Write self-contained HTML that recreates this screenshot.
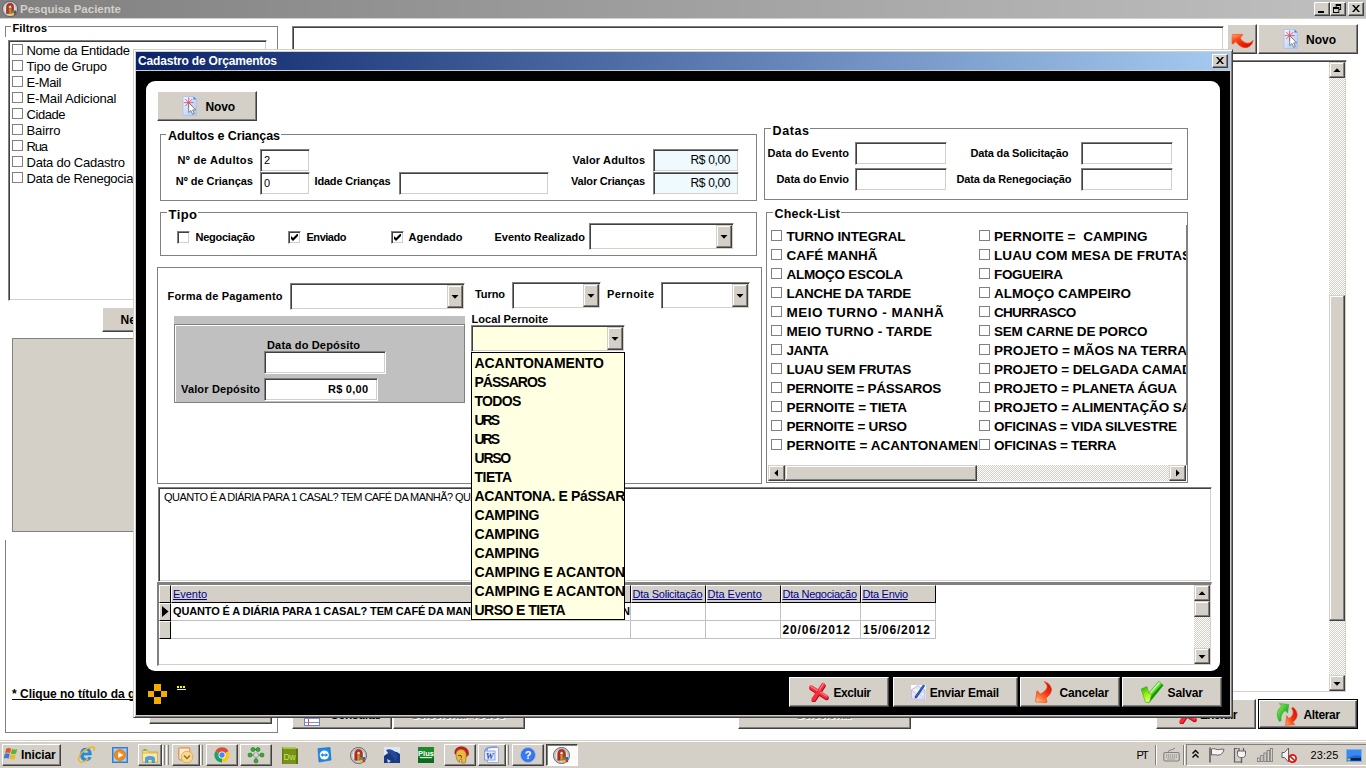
<!DOCTYPE html>
<html><head><meta charset="utf-8"><title>Cadastro de Orçamentos</title>
<style>
html,body{margin:0;padding:0;}
body{width:1366px;height:768px;overflow:hidden;background:#fff;position:relative;font-family:"Liberation Sans",sans-serif;}
.a{position:absolute;box-sizing:border-box;}
.t{position:absolute;white-space:pre;line-height:1;font-family:"Liberation Sans",sans-serif;}
.sk{border:1px solid;border-color:#808080 #fff #fff #808080;box-shadow:inset 1px 1px 0 #404040,inset -1px -1px 0 #d4d0c8;}
.rs{background:#d4d0c8;border:1px solid;border-color:#fff #404040 #404040 #fff;box-shadow:inset -1px -1px 0 #808080,inset 1px 1px 0 #d4d0c8;}
.rs2{background:#d4d0c8;border:1px solid;border-color:#d4d0c8 #404040 #404040 #d4d0c8;box-shadow:inset -1px -1px 0 #808080,inset 1px 1px 0 #fff;}
.gb{border:1px solid #808080;box-shadow:inset 1px 1px 0 #fff, 1px 1px 0 #fff;}
.cb{background:#fff;border:1px solid #808080;}
.dither{background-image:conic-gradient(#fff 25%,#d4d0c8 0 50%,#fff 0 75%,#d4d0c8 0);background-size:2px 2px;}
</style></head>
<body>
<div class="a " style="left:0px;top:0px;width:1366px;height:18px;background:linear-gradient(90deg,#808080,#c0c0c0);"></div>
<div class="a " style="left:0px;top:18px;width:1366px;height:1px;background:#d4d0c8;"></div>
<span class="t" style="left:20.00px;top:4.37px;font-size:11.5px;color:#d4d0c8;font-weight:bold;">Pesquisa Paciente</span>
<div class="a rs" style="left:1314px;top:2px;width:16px;height:14px;"></div>
<div class="a " style="left:1318px;top:11px;width:6px;height:2px;background:#000;"></div>
<div class="a rs" style="left:1330px;top:2px;width:16px;height:14px;"></div>
<svg class="a" style="left:1333px;top:4px" width="9" height="10" viewBox="0 0 10 10" preserveAspectRatio="none"><path d="M3 0h6v6H7V5h1V2H4v1H3z M0 3h7v6H0z M1 5v3h5V5z" fill="#000" fill-rule="evenodd"/></svg>
<div class="a rs" style="left:1348px;top:2px;width:16px;height:14px;"></div>
<svg class="a" style="left:1352px;top:5px" width="8" height="7" viewBox="0 0 8 7"><path d="M0 0h2l2 2.4L6 0h2L5 3.5 8 7H6L4 4.6 2 7H0l3-3.5z" fill="#000"/></svg>
<svg class="a" style="left:2px;top:1px" width="16" height="16" viewBox="0 0 16 16">
<circle cx="8" cy="8" r="7.6" fill="#c8ccd4" stroke="#555" stroke-width=".8"/>
<circle cx="8" cy="8" r="6.2" fill="#e9e4dc" stroke="#9aa" stroke-width=".5"/>
<path d="M4.5 12.5V6.2c0-2.6 1.6-3.9 3.6-3.9s3.6 1.3 3.6 3.9v6.3h-2V6.4c0-1.4-.6-2.1-1.6-2.1s-1.6.7-1.6 2.1v6.1z" fill="#c22d16" stroke="#7a1408" stroke-width=".5"/>
<path d="M6.9 12.5V7h2.2v5.5z" fill="#e8902a" stroke="#7a1408" stroke-width=".4"/>
<rect x="9.5" y="9.5" width="2.5" height="2.5" fill="#3aa23a"/><rect x="12" y="9.5" width="2.2" height="2.5" fill="#2d55c8"/>
<rect x="9.5" y="12" width="2.5" height="2.3" fill="#e8c020"/><rect x="12" y="12" width="2.2" height="2.3" fill="#d03020"/>
</svg>
<div class="a " style="left:5px;top:26px;width:1px;height:11px;background:#808080;"></div>
<div class="a " style="left:277px;top:26px;width:1px;height:707px;background:#808080;"></div>
<div class="a " style="left:5px;top:26px;width:273px;height:1px;background:#808080;"></div>
<div class="a " style="left:11px;top:24px;width:37px;height:6px;background:#fff;"></div>
<span class="t" style="left:12.50px;top:22.69px;font-size:11px;color:#000;font-weight:bold;letter-spacing:0.148px;">Filtros</span>
<div class="a " style="left:5px;top:540px;width:1px;height:193px;background:#808080;"></div>
<div class="a " style="left:5px;top:732px;width:273px;height:1px;background:#808080;"></div>
<div class="a sk" style="left:8px;top:40px;width:259px;height:261px;background:#fff;"></div>
<div class="a cb" style="left:12px;top:44px;width:11px;height:11px;"></div>
<span class="t" style="left:26.50px;top:44.00px;font-size:13px;color:#000;letter-spacing:-0.279px;">Nome da Entidade</span>
<div class="a cb" style="left:12px;top:60px;width:11px;height:11px;"></div>
<span class="t" style="left:26.50px;top:60.00px;font-size:13px;color:#000;letter-spacing:-0.177px;">Tipo de Grupo</span>
<div class="a cb" style="left:12px;top:76px;width:11px;height:11px;"></div>
<span class="t" style="left:26.50px;top:76.00px;font-size:13px;color:#000;letter-spacing:-0.367px;">E-Mail</span>
<div class="a cb" style="left:12px;top:92px;width:11px;height:11px;"></div>
<span class="t" style="left:26.50px;top:92.00px;font-size:13px;color:#000;letter-spacing:-0.166px;">E-Mail Adicional</span>
<div class="a cb" style="left:12px;top:108px;width:11px;height:11px;"></div>
<span class="t" style="left:26.50px;top:108.00px;font-size:13px;color:#000;letter-spacing:-0.439px;">Cidade</span>
<div class="a cb" style="left:12px;top:124px;width:11px;height:11px;"></div>
<span class="t" style="left:26.50px;top:124.00px;font-size:13px;color:#000;letter-spacing:-0.136px;">Bairro</span>
<div class="a cb" style="left:12px;top:140px;width:11px;height:11px;"></div>
<span class="t" style="left:26.50px;top:140.00px;font-size:13px;color:#000;letter-spacing:-1.174px;">Rua</span>
<div class="a cb" style="left:12px;top:156px;width:11px;height:11px;"></div>
<span class="t" style="left:26.50px;top:156.00px;font-size:13px;color:#000;letter-spacing:-0.226px;">Data do Cadastro</span>
<div class="a cb" style="left:12px;top:172px;width:11px;height:11px;"></div>
<span class="t" style="left:26.50px;top:172.00px;font-size:13px;color:#000;letter-spacing:-0.277px;">Data de Renegociação</span>
<div class="a rs" style="left:102px;top:307px;width:80px;height:25px;"></div>
<span class="t" style="left:120.50px;top:313.54px;font-size:12px;color:#000;font-weight:bold;">Nenhum</span>
<div class="a " style="left:12px;top:338px;width:258px;height:194px;background:#d4d0c8;border:1px solid #808080;"></div>
<span class="t" style="left:12px;top:687.84px;font-size:12px;font-weight:bold;letter-spacing:0.002px;text-decoration:underline;text-decoration-skip-ink:none;">* Clique no título da grade para ordenar</span>
<div class="a rs" style="left:149px;top:694px;width:123px;height:30px;"></div>
<div class="a sk" style="left:292px;top:26px;width:932px;height:27px;background:#fff;"></div>
<div class="a rs" style="left:1227px;top:24px;width:30px;height:30px;"></div>
<svg class="a" style="left:1231px;top:32.7px" width="23" height="16" viewBox="0 0 23 16">
<defs><linearGradient id="ra" x1="0" y1="0" x2=".7" y2="1"><stop offset="0" stop-color="#ffb868"/><stop offset=".35" stop-color="#fa4a1a"/><stop offset=".7" stop-color="#ee2408"/><stop offset="1" stop-color="#d01000"/></linearGradient></defs>
<path d="M1.300 1.600L11.300 1.300Q12 1.500 11.500 2.200L9.100 4.900C10.500 7.500 13.500 10 16.500 10.200 19 10.200 20.800 9 21.900 7.300 21.900 9.500 21 11.200 19.600 12.400 17.500 14.500 14.500 15 12.500 14.500 9.500 13.800 6.500 11.500 4.900 8.600L1.900 11Q1.100 11.400 1.100 10.500z" fill="url(#ra)" stroke="#ff4a20" stroke-width=".7" stroke-linejoin="round"/></svg>
<div class="a rs" style="left:1258px;top:24px;width:100px;height:30px;"></div>
<svg class="a" style="left:1283px;top:29px" width="16" height="20" viewBox="0 0 16 20">
<defs><linearGradient id="np1283" x1="0" y1="0" x2="1" y2="1"><stop offset="0" stop-color="#f2f7ff"/><stop offset="1" stop-color="#a9c6f5"/></linearGradient></defs>
<path d="M1 .5h10.500l3 3V19.500H1z" fill="url(#np1283)" stroke="#a8c0ec" stroke-width=".8"/>
<path d="M11.500 .5l3 3h-3z" fill="#2a80f0"/>
<path d="M6.700 1.500v10M1.700 6.600h10M3.200 3.100l7 7M10.200 3.100l-7 7" stroke="#f0344a" stroke-width=".9" opacity=".85"/>
<path d="M6.700 6.600v10l2.200-2.100 1.700 3.800 1.700-.8-1.700-3.600h3.100z" fill="#fff" stroke="#6a6a6a" stroke-width=".8" stroke-linejoin="round"/>
</svg>
<span class="t" style="left:1306.00px;top:34.04px;font-size:12px;color:#000;font-weight:bold;">Novo</span>
<div class="a sk" style="left:292px;top:60px;width:1055px;height:633px;background:#fff;"></div>
<div class="a dither" style="left:1329px;top:62px;width:16px;height:629px;"></div>
<div class="a rs2" style="left:1329px;top:62px;width:16px;height:16px;"></div>
<svg class="a" style="left:1333px;top:68px" width="8" height="4" viewBox="0 0 8 4"><path d="M0.5 4h7L4 0.3z" fill="#000"/></svg>
<div class="a rs2" style="left:1329px;top:295px;width:16px;height:326px;"></div>
<div class="a rs2" style="left:1329px;top:675px;width:16px;height:16px;"></div>
<svg class="a" style="left:1333px;top:681.5px" width="8" height="4" viewBox="0 0 8 4"><path d="M0.5 0h7L4 3.7z" fill="#000"/></svg>
<div class="a rs" style="left:292px;top:699px;width:100px;height:30px;"></div>
<svg class="a" style="left:303.5px;top:710px" width="16" height="16" viewBox="0 0 16 16"><rect x=".5" y=".5" width="15" height="15" fill="#fff" stroke="#7080c0"/><path d="M4.5 1v14" stroke="#e04040" stroke-width="1"/><path d="M1 4.5h14M1 8.5h14M1 12.5h14" stroke="#8090d0" stroke-width="1"/></svg>
<span class="t" style="left:330.00px;top:709.04px;font-size:12px;color:#000;font-weight:bold;letter-spacing:-0.501px;">Consultar</span>
<div class="a rs" style="left:393px;top:699px;width:132px;height:30px;"></div>
<span class="t" style="left:412.00px;top:709.74px;font-size:12px;color:#fff;font-weight:bold;letter-spacing:-0.342px;">Selecionar Todos</span>
<span class="t" style="left:411.00px;top:708.74px;font-size:12px;color:#808080;font-weight:bold;letter-spacing:-0.342px;">Selecionar Todos</span>
<div class="a rs" style="left:738px;top:699px;width:173px;height:30px;"></div>
<span class="t" style="left:797.00px;top:709.74px;font-size:12px;color:#fff;font-weight:bold;letter-spacing:-0.411px;">Selecionar</span>
<span class="t" style="left:796.00px;top:708.74px;font-size:12px;color:#808080;font-weight:bold;letter-spacing:-0.411px;">Selecionar</span>
<div class="a rs" style="left:1156px;top:699px;width:100px;height:30px;"></div>
<svg class="a" style="left:1175.5px;top:703.7px" width="21" height="20" viewBox="0 0 21 20">
<g stroke-linecap="round" fill="none">
<path d="M3.100 5.700L18.300 15.300M15.200 3.200L5.400 17.800" stroke="#b80814" stroke-width="4.200" transform="translate(.4 .8)"/>
<path d="M3.100 5.300L18.300 14.900M15.200 2.800L5.400 17.400" stroke="#f42c3c" stroke-width="4"/>
<path d="M3 4.400L9.300 8.400M15.400 1.900L11.300 8M12.500 10.300L18.400 14" stroke="#ff98a0" stroke-width="1.200" opacity=".75"/>
</g></svg>
<span class="t" style="left:1200.00px;top:709.14px;font-size:12px;color:#000;font-weight:bold;letter-spacing:-0.420px;">Excluir</span>
<div class="a " style="left:1258px;top:699px;width:100px;height:30px;background:#000;"></div>
<div class="a rs" style="left:1259px;top:700px;width:98px;height:28px;"></div>
<svg class="a" style="left:1274.8px;top:701.7px" width="25" height="25" viewBox="0 0 25 25">
<defs><linearGradient id="ag" x1="0" y1="0" x2="1" y2="1"><stop offset="0" stop-color="#a6f070"/><stop offset=".5" stop-color="#3cc030"/><stop offset="1" stop-color="#108a18"/></linearGradient>
<linearGradient id="ar" x1="1" y1="0" x2="0" y2="1"><stop offset="0" stop-color="#c80800"/><stop offset=".5" stop-color="#f03010"/><stop offset="1" stop-color="#ffb060"/></linearGradient></defs>
<path d="M13.700 2.400L4.400 1.600 6.600 4.200C2.500 7.500 .3 12.500 4.400 19.400L6.200 18.600C5.200 14.500 7 11 10.300 8.400L12.500 10.900z" fill="url(#ag)" stroke="#2aa828" stroke-width=".6" stroke-linejoin="round"/>
<path d="M10.500 23.400L19.800 22.600 17.800 20.200C22 17 25 11.500 18.100 5.200L16.600 6.300C19.500 10.500 18 14 14 16.600L11.700 13.700z" fill="url(#ar)" stroke="#f04820" stroke-width=".6" stroke-linejoin="round"/></svg>
<span class="t" style="left:1303.40px;top:709.44px;font-size:12px;color:#000;font-weight:bold;letter-spacing:-0.331px;">Alterar</span>
<div class="a " style="left:0px;top:740px;width:1366px;height:28px;background:#d4d0c8;"></div>
<div class="a " style="left:0px;top:741px;width:1366px;height:1px;background:#fff;"></div>
<div class="a rs" style="left:2px;top:744px;width:59px;height:22px;"></div>
<svg class="a" style="left:4px;top:746px" width="16" height="16" viewBox="0 0 16 16">
<path d="M2.2 2.6C4 1.600 5.600 1.700 7.200 2.700L6 7.200C4.500 6.300 3 6.200 1 7.200z" fill="#e8502a"/>
<path d="M8 2.900c1.700.900 3.400 1 5.400 0L12 7.500c-1.800.900-3.500.800-5.200-.1z" fill="#5ab52e"/>
<path d="M.8 8C2.600 7 4.200 7.100 5.800 8.100L4.600 12.600C3 11.700 1.500 11.600-.3 12.600z" fill="#3a78d8"/>
<path d="M6.600 8.400c1.700.900 3.400 1 5.300 0l-1.300 4.500c-1.800.9-3.400.8-5.200-.1z" fill="#f2b820"/>
</svg>
<span class="t" style="left:21.00px;top:748.84px;font-size:12px;color:#000;font-weight:bold;letter-spacing:-0.108px;">Iniciar</span>
<svg class="a" style="left:77px;top:745px" width="19" height="19" viewBox="0 0 19 19">
<text x="2.200" y="16" font-family="Liberation Sans" font-weight="bold" font-size="23" fill="#1e8ee8" stroke="#1670c8" stroke-width=".3">e</text>
<path d="M2.500 16.500C-1 12 7 3.500 15 2c3-.5 3 1.800 1.600 3.800" fill="none" stroke="#f2b41e" stroke-width="1.500"/>
<path d="M2.800 16.700c2 1.200 6-1 8.500-3.300" fill="none" stroke="#f2b41e" stroke-width="1.300"/></svg>
<svg class="a" style="left:112px;top:747px" width="16" height="16" viewBox="0 0 16 16">
<rect x=".5" y=".5" width="15" height="15" fill="#6aa8e8" stroke="#3a78c8"/><rect x="2" y="2" width="12" height="12" fill="#a8d0f8"/>
<circle cx="8" cy="8" r="5.600" fill="#f08a18" stroke="#d06808" stroke-width=".6"/><path d="M6.300 5v6l5-3z" fill="#fff"/></svg>
<div class="a rs" style="left:138px;top:744px;width:24px;height:22px;"></div>
<svg class="a" style="left:142px;top:748px" width="16" height="15" viewBox="0 0 16 15">
<path d="M.5 2.500h5l1.500 1.500h8.500v10H.5z" fill="#f0d878" stroke="#c8a840" stroke-width=".8"/>
<path d="M.5 5h15v9H.5z" fill="#f8e8a0" stroke="#c8a840" stroke-width=".6"/>
<path d="M3.500 14.500v-4.500c0-2 9-2 9 0v4.500h-2.500v-3h-4v3z" fill="#48a0e8" stroke="#2878c8" stroke-width=".5"/>
<rect x="1.500" y="1" width="3" height="1.200" fill="#58b838"/></svg>
<div class="a " style="left:162px;top:745px;width:3px;height:20px;border-left:1px solid #fff;border-right:1px solid #808080;background:#d4d0c8;"></div>
<div class="a " style="left:166px;top:745px;width:3px;height:20px;border-left:1px solid #fff;border-right:1px solid #808080;background:#d4d0c8;"></div>
<div class="a rs" style="left:172px;top:744px;width:28px;height:22px;"></div>
<svg class="a" style="left:178px;top:747px" width="16" height="17" viewBox="0 0 16 17">
<rect x=".8" y=".8" width="11" height="12" rx="1.500" fill="#fbe8d8" stroke="#e89040" stroke-width="1.200"/>
<circle cx="9" cy="10" r="5.800" fill="#f8d890" stroke="#d8a848" stroke-width=".8"/>
<path d="M6 8.500l3 3 3-3" fill="none" stroke="#a06818" stroke-width="1.300"/></svg>
<div class="a " style="left:200px;top:745px;width:3px;height:20px;border-left:1px solid #fff;border-right:1px solid #808080;background:#d4d0c8;"></div>
<div class="a rs" style="left:206px;top:744px;width:32px;height:22px;"></div>
<svg class="a" style="left:214px;top:747px" width="16" height="16" viewBox="0 0 16 16">
<circle cx="8" cy="8" r="7.600" fill="#e8e8e8"/>
<path d="M8 8L1.400 4.200A7.600 7.600 0 0 1 14.600 4.200z" fill="#dd4b3a"/>
<path d="M8 8L14.600 4.200A7.600 7.600 0 0 1 8 15.600z" fill="#f7c920"/>
<path d="M8 8L8 15.600A7.600 7.600 0 0 1 1.400 4.200z" fill="#1ea362"/>
<circle cx="8" cy="8" r="3.500" fill="#fff"/><circle cx="8" cy="8" r="2.700" fill="#4a88f0"/></svg>
<div class="a rs" style="left:240px;top:744px;width:32px;height:22px;"></div>
<svg class="a" style="left:247px;top:746px" width="18" height="18" viewBox="0 0 18 18">
<path d="M4 9h10M9 9v6M6 3.500h5" stroke="#555" stroke-width=".8"/>
<circle cx="6" cy="3.500" r="2" fill="#30b030" stroke="#187018" stroke-width=".6"/><circle cx="11" cy="3.500" r="2" fill="#30b030" stroke="#187018" stroke-width=".6"/>
<circle cx="3" cy="9" r="2" fill="#30b030" stroke="#187018" stroke-width=".6"/><circle cx="15" cy="9" r="2" fill="#30b030" stroke="#187018" stroke-width=".6"/>
<rect x="7" y="7" width="4" height="4" fill="#ddd" stroke="#888" stroke-width=".5"/>
<circle cx="9" cy="15" r="2" fill="#30b030" stroke="#187018" stroke-width=".6"/></svg>
<svg class="a" style="left:282px;top:746.5px" width="16" height="17" viewBox="0 0 16 17">
<rect x="0" y=".5" width="14" height="16.500" fill="#788f1e"/><rect x="14" y="1.500" width="2" height="15.500" fill="#5e7612"/>
<rect x="0" y=".5" width="1.200" height="16.500" fill="#667c14"/><rect x=".8" y=".5" width="13.200" height="1.200" fill="#b6de3e"/>
<text x="7.600" y="12.500" font-family="Liberation Sans" font-size="8.500" text-anchor="middle" fill="#c8e850">Dw</text></svg>
<svg class="a" style="left:317px;top:747px" width="15" height="16" viewBox="0 0 15 16">
<path d="M1 1.500l12-1 1 12.500-12 2z" fill="#1a8ae8" stroke="#0a68c8" stroke-width=".6"/>
<circle cx="7.300" cy="8" r="4.600" fill="#fff"/><path d="M3.500 8l2.500-2v1.300h2.600V6l2.500 2-2.500 2V8.700H6V10z" fill="#1a8ae8"/></svg>
<svg class="a" style="left:350px;top:746.5px" width="17" height="17" viewBox="0 0 16 16">
<circle cx="8" cy="8" r="7.6" fill="#c8ccd4" stroke="#555" stroke-width=".8"/>
<circle cx="8" cy="8" r="6.2" fill="#e9e4dc" stroke="#9aa" stroke-width=".5"/>
<path d="M4.5 12.5V6.2c0-2.6 1.6-3.9 3.6-3.9s3.6 1.3 3.6 3.9v6.3h-2V6.4c0-1.4-.6-2.1-1.6-2.1s-1.6.7-1.6 2.1v6.1z" fill="#c22d16" stroke="#7a1408" stroke-width=".5"/>
<path d="M6.9 12.5V7h2.2v5.5z" fill="#e8902a" stroke="#7a1408" stroke-width=".4"/>
<rect x="9.5" y="9.5" width="2.5" height="2.5" fill="#3aa23a"/><rect x="12" y="9.5" width="2.2" height="2.5" fill="#2d55c8"/>
<rect x="9.5" y="12" width="2.5" height="2.3" fill="#e8c020"/><rect x="12" y="12" width="2.2" height="2.3" fill="#d03020"/>
</svg>
<svg class="a" style="left:384px;top:747px" width="16" height="16" viewBox="0 0 16 16">
<rect width="16" height="16" fill="#1a3a80"/><path d="M0 0h16v7C11 3 6 4 0 9z" fill="#dfe8f4"/>
<path d="M2 3c4-2 9 0 11 5 1 3-1 5-2 7-1-3-2-6-5-8-2-1-3-2-4-4z" fill="#24489a"/><path d="M3 12l4 2-3 2z" fill="#c8d8f0"/></svg>
<svg class="a" style="left:418px;top:747px" width="16" height="16" viewBox="0 0 16 16">
<rect width="16" height="16" fill="#1a8a2a"/><rect y="11" width="16" height="5" fill="#0e6a1c"/>
<text x="8" y="8.800" font-family="Liberation Sans" font-size="7.500" font-weight="bold" text-anchor="middle" fill="#fff">Plus</text>
<rect x="2" y="10" width="12" height="1.200" fill="#fff" opacity=".8"/></svg>
<div class="a rs" style="left:444px;top:744px;width:32px;height:22px;"></div>
<svg class="a" style="left:453px;top:746px" width="17" height="18" viewBox="0 0 17 18">
<path d="M2 8C1 3 5 .5 9 .8c4 .3 7 3 6.500 8l-2 2c.5-5-2-7.500-5.500-7.500C5 3.300 3 5 3.200 8z" fill="#d01818" stroke="#900808" stroke-width=".5"/>
<path d="M3 8.500c0-3.500 2.500-5 5-5s5.500 2 5.200 6.500l-.7 6.500c-1.500.8-3 .8-3.800.4L8.500 13l-2 1 .3 2.600C4.500 15.500 3 12.500 3 8.500z" fill="#e8b840" stroke="#906010" stroke-width=".6"/>
<path d="M5 9.500h3l.5 2.500" fill="none" stroke="#604008" stroke-width=".9"/></svg>
<div class="a rs" style="left:478px;top:744px;width:28px;height:22px;"></div>
<svg class="a" style="left:484px;top:746px" width="17" height="18" viewBox="0 0 17 18">
<path d="M3.500 1.500h11v15h-11z" fill="#f4f6fc" stroke="#8aa0d8" stroke-width=".8"/>
<path d="M1 4.500C2 1.500 5 .8 13 1" fill="none" stroke="#7a98e0" stroke-width="1.400"/>
<rect x=".5" y="5" width="10.500" height="9" fill="#dfe8fa" stroke="#6a88d0" stroke-width=".7"/>
<text x="5.800" y="12.500" font-family="Liberation Serif" font-style="italic" font-weight="bold" font-size="9" text-anchor="middle" fill="#2a4ab0">W</text></svg>
<div class="a " style="left:506px;top:745px;width:3px;height:20px;border-left:1px solid #fff;border-right:1px solid #808080;background:#d4d0c8;"></div>
<div class="a rs" style="left:512px;top:744px;width:32px;height:22px;"></div>
<svg class="a" style="left:520px;top:747px" width="16" height="16" viewBox="0 0 16 16">
<circle cx="8" cy="8" r="7.400" fill="#2a68e0" stroke="#9ab8f0" stroke-width="1"/><circle cx="8" cy="8" r="6" fill="#3a78f0"/>
<text x="8" y="12" font-family="Liberation Sans" font-weight="bold" font-size="11" text-anchor="middle" fill="#fff">?</text></svg>
<div class="a " style="left:546px;top:744px;width:32px;height:22px;background:#fbfbfa;border:1px solid;border-color:#404040 #fff #fff #404040;box-shadow:inset 1px 1px 0 #808080;"></div>
<svg class="a" style="left:553px;top:746.5px" width="17" height="17" viewBox="0 0 16 16">
<circle cx="8" cy="8" r="7.6" fill="#c8ccd4" stroke="#555" stroke-width=".8"/>
<circle cx="8" cy="8" r="6.2" fill="#e9e4dc" stroke="#9aa" stroke-width=".5"/>
<path d="M4.5 12.5V6.2c0-2.6 1.6-3.9 3.6-3.9s3.6 1.3 3.6 3.9v6.3h-2V6.4c0-1.4-.6-2.1-1.6-2.1s-1.6.7-1.6 2.1v6.1z" fill="#c22d16" stroke="#7a1408" stroke-width=".5"/>
<path d="M6.9 12.5V7h2.2v5.5z" fill="#e8902a" stroke="#7a1408" stroke-width=".4"/>
<rect x="9.5" y="9.5" width="2.5" height="2.5" fill="#3aa23a"/><rect x="12" y="9.5" width="2.2" height="2.5" fill="#2d55c8"/>
<rect x="9.5" y="12" width="2.5" height="2.3" fill="#e8c020"/><rect x="12" y="12" width="2.2" height="2.3" fill="#d03020"/>
</svg>
<span class="t" style="left:1136.60px;top:750.09px;font-size:11px;color:#000;letter-spacing:-1.856px;">PT</span>
<div class="a " style="left:1155px;top:745px;width:2px;height:20px;border-left:1px solid #808080;border-right:1px solid #fff;"></div>
<svg class="a" style="left:1163px;top:747px" width="17" height="15" viewBox="0 0 17 15">
<path d="M5 5C6 2 9 4 12 1" fill="none" stroke="#808080" stroke-width="1"/>
<rect x=".8" y="5.500" width="15.400" height="8.500" rx="1.500" fill="#d4d0c8" stroke="#808080" stroke-width="1.100"/>
<path d="M3 8h11M3 10h11M4.500 12h8" stroke="#808080" stroke-width="1" stroke-dasharray="1.200 .8"/></svg>
<div class="a " style="left:1183px;top:745px;width:2px;height:20px;border-left:1px solid #808080;border-right:1px solid #fff;"></div>
<div class="a " style="left:1186px;top:744px;width:182px;height:22px;border:1px solid;border-color:#808080 #fff #fff #808080;"></div>
<svg class="a" style="left:1192px;top:749px" width="7" height="10" viewBox="0 0 7 10"><path d="M.5 4.500l3-3 3 3M.5 8.500l3-3 3 3" fill="none" stroke="#000" stroke-width="1.400"/></svg>
<svg class="a" style="left:1208px;top:746px" width="18" height="18" viewBox="0 0 18 18"><path d="M2 1.500v15" stroke="#606060" stroke-width="1.600"/><path d="M3.500 3c3-1.500 5 1.500 8 .5 2-.5 3.500-.5 4.500 0-1 4-3 5-5 5.500-2.500.5-4.500-1-7.500 0z" fill="#f4f4f4" stroke="#606060" stroke-width="1"/></svg>
<svg class="a" style="left:1233px;top:747px" width="15" height="17" viewBox="0 0 15 17"><path d="M4.500 1.500H1.500v13.500h7" fill="none" stroke="#606060" stroke-width="1.200"/><path d="M6 1v3M10.500 1v3" stroke="#606060" stroke-width="1.300"/><path d="M4.500 4h8v3.500c0 2-1.500 3-3 3h-2c-1.500 0-3-1-3-3z" fill="#f4f4f4" stroke="#606060" stroke-width="1"/><path d="M8.500 10.500v5.500" stroke="#606060" stroke-width="1.400"/></svg>
<svg class="a" style="left:1257px;top:748px" width="16" height="14" viewBox="0 0 16 14"><g fill="#d4d0c8" stroke="#808080" stroke-width=".9"><rect x=".5" y="10" width="2.500" height="3.500"/><rect x="3.700" y="7.500" width="2.500" height="6"/><rect x="6.900" y="5" width="2.500" height="8.500"/><rect x="10.100" y="2.500" width="2.500" height="11"/><rect x="13.300" y=".5" width="2.300" height="13"/></g></svg>
<svg class="a" style="left:1281px;top:746px" width="17" height="18" viewBox="0 0 17 18"><path d="M1 6.500h2.500l4-4.500v14l-4-4.500H1z" fill="#f4f4f4" stroke="#606060" stroke-width="1"/><circle cx="11.500" cy="12.500" r="3.600" fill="#fff" stroke="#e01010" stroke-width="1.700"/><path d="M9 10l5 5" stroke="#e01010" stroke-width="1.700"/></svg>
<span class="t" style="left:1310.60px;top:750.09px;font-size:11px;color:#000;letter-spacing:0.043px;">23:25</span>
<svg class="a" style="left:1346px;top:749px" width="16" height="13" viewBox="0 0 16 13"><rect x=".5" y=".5" width="15" height="12" fill="#1a68d8" stroke="#78b0f0"/><path d="M1 1h14v6C9 5 5 8 1 9z" fill="#3a88f0"/><rect x="5" y="9" width="10" height="2.500" fill="#102040"/><rect x="1.500" y="9.500" width="2.500" height="2" fill="#f0c020"/></svg>
<div class="a " style="left:133px;top:49px;width:1100px;height:669px;background:#d4d0c8;border:1px solid;border-color:#d4d0c8 #404040 #404040 #d4d0c8;box-shadow:inset 1px 1px 0 #fff,inset -1px -1px 0 #808080;"></div>
<div class="a " style="left:136px;top:52px;width:1094px;height:18px;background:linear-gradient(90deg,#0a246a,#a6caf0);"></div>
<span class="t" style="left:138.00px;top:55.04px;font-size:12px;color:#fff;font-weight:bold;letter-spacing:-0.177px;">Cadastro de Orçamentos</span>
<div class="a rs" style="left:1212px;top:54px;width:16px;height:14px;"></div>
<svg class="a" style="left:1216px;top:57px" width="8" height="7" viewBox="0 0 8 7"><path d="M0 0h2l2 2.4L6 0h2L5 3.5 8 7H6L4 4.6 2 7H0l3-3.5z" fill="#000"/></svg>
<div class="a " style="left:136px;top:70px;width:1094px;height:1px;background:#d4d0c8;"></div>
<div class="a " style="left:136px;top:71px;width:1094px;height:644px;background:#000;"></div>
<div class="a " style="left:146px;top:81px;width:1074px;height:590px;background:#fff;border-radius:9px;"></div>
<div class="a rs" style="left:157px;top:91px;width:100px;height:30px;"></div>
<svg class="a" style="left:182px;top:96px" width="16" height="20" viewBox="0 0 16 20">
<defs><linearGradient id="np182" x1="0" y1="0" x2="1" y2="1"><stop offset="0" stop-color="#f2f7ff"/><stop offset="1" stop-color="#a9c6f5"/></linearGradient></defs>
<path d="M1 .5h10.500l3 3V19.500H1z" fill="url(#np182)" stroke="#a8c0ec" stroke-width=".8"/>
<path d="M11.500 .5l3 3h-3z" fill="#2a80f0"/>
<path d="M6.700 1.500v10M1.700 6.600h10M3.200 3.100l7 7M10.200 3.100l-7 7" stroke="#f0344a" stroke-width=".9" opacity=".85"/>
<path d="M6.700 6.600v10l2.200-2.100 1.700 3.800 1.700-.8-1.700-3.600h3.100z" fill="#fff" stroke="#6a6a6a" stroke-width=".8" stroke-linejoin="round"/>
</svg>
<span class="t" style="left:205.50px;top:101.04px;font-size:12px;color:#000;font-weight:bold;letter-spacing:-0.167px;">Novo</span>
<div class="a gb" style="left:160px;top:134px;width:597px;height:67px;"></div>
<div class="a " style="left:166px;top:132px;width:115px;height:5px;background:#fff;"></div>
<span class="t" style="left:168.00px;top:129.72px;font-size:12.5px;color:#000;font-weight:bold;letter-spacing:-0.072px;">Adultos e Crianças</span>
<span class="t" style="left:177.50px;top:154.69px;font-size:11px;color:#000;font-weight:bold;letter-spacing:0.338px;">Nº de Adultos</span>
<div class="a sk" style="left:260px;top:149px;width:50px;height:23px;background:#fff;"></div>
<span class="t" style="left:264.00px;top:154.69px;font-size:11px;color:#000;">2</span>
<span class="t" style="left:175.70px;top:176.19px;font-size:11px;color:#000;font-weight:bold;letter-spacing:-0.006px;">Nº de Crianças</span>
<div class="a sk" style="left:260px;top:172px;width:50px;height:23px;background:#fff;"></div>
<span class="t" style="left:264.00px;top:177.69px;font-size:11px;color:#000;">0</span>
<span class="t" style="left:314.50px;top:176.19px;font-size:11px;color:#000;font-weight:bold;letter-spacing:-0.174px;">Idade Crianças</span>
<div class="a sk" style="left:399px;top:172px;width:150px;height:23px;background:#fff;"></div>
<span class="t" style="left:572.50px;top:154.69px;font-size:11px;color:#000;font-weight:bold;letter-spacing:0.167px;">Valor Adultos</span>
<div class="a sk" style="left:653px;top:149px;width:86px;height:23px;background:#eefaff;"></div>
<span class="t" style="left:690.50px;top:154.14px;font-size:12px;color:#000;letter-spacing:-0.338px;">R$ 0,00</span>
<span class="t" style="left:571.00px;top:176.19px;font-size:11px;color:#000;font-weight:bold;letter-spacing:-0.187px;">Valor Crianças</span>
<div class="a sk" style="left:653px;top:172px;width:86px;height:23px;background:#eefaff;"></div>
<span class="t" style="left:690.50px;top:177.14px;font-size:12px;color:#000;letter-spacing:-0.338px;">R$ 0,00</span>
<div class="a gb" style="left:764px;top:128px;width:424px;height:72px;"></div>
<div class="a " style="left:770.5px;top:126px;width:39.5px;height:5px;background:#fff;"></div>
<span class="t" style="left:772.50px;top:124.62px;font-size:12.5px;color:#000;font-weight:bold;letter-spacing:0.614px;">Datas</span>
<span class="t" style="left:767.50px;top:147.69px;font-size:11px;color:#000;font-weight:bold;letter-spacing:0.110px;">Data do Evento</span>
<div class="a sk" style="left:855px;top:142px;width:92px;height:23px;background:#fff;"></div>
<span class="t" style="left:970.50px;top:147.69px;font-size:11px;color:#000;font-weight:bold;letter-spacing:-0.159px;">Data da Solicitação</span>
<div class="a sk" style="left:1081px;top:142px;width:92px;height:23px;background:#fff;"></div>
<span class="t" style="left:776.50px;top:173.69px;font-size:11px;color:#000;font-weight:bold;letter-spacing:-0.070px;">Data do Envio</span>
<div class="a sk" style="left:855px;top:168px;width:92px;height:23px;background:#fff;"></div>
<span class="t" style="left:956.50px;top:173.69px;font-size:11px;color:#000;font-weight:bold;letter-spacing:-0.125px;">Data da Renegociação</span>
<div class="a sk" style="left:1081px;top:168px;width:92px;height:23px;background:#fff;"></div>
<div class="a gb" style="left:160px;top:212px;width:597px;height:44px;"></div>
<div class="a " style="left:166.5px;top:210px;width:31.5px;height:5px;background:#fff;"></div>
<span class="t" style="left:168.50px;top:207.60px;font-size:13px;color:#000;font-weight:bold;letter-spacing:0.433px;">Tipo</span>
<div class="a sk" style="left:177px;top:231px;width:13px;height:13px;background:#fff;"></div>
<span class="t" style="left:195.50px;top:231.69px;font-size:11px;color:#000;font-weight:bold;letter-spacing:-0.250px;">Negociação</span>
<div class="a sk" style="left:288px;top:231px;width:13px;height:13px;background:#fff;"></div>
<svg class="a" style="left:291px;top:234px" width="7" height="7" viewBox="0 0 7 7"><path d="M0 2v3l2 2 5-5V-1L2 4z" fill="#000"/></svg>
<span class="t" style="left:306.50px;top:231.69px;font-size:11px;color:#000;font-weight:bold;letter-spacing:-0.464px;">Enviado</span>
<div class="a sk" style="left:391px;top:231px;width:13px;height:13px;background:#fff;"></div>
<svg class="a" style="left:394px;top:234px" width="7" height="7" viewBox="0 0 7 7"><path d="M0 2v3l2 2 5-5V-1L2 4z" fill="#000"/></svg>
<span class="t" style="left:408.50px;top:231.69px;font-size:11px;color:#000;font-weight:bold;letter-spacing:0.032px;">Agendado</span>
<span class="t" style="left:494.50px;top:231.69px;font-size:11px;color:#000;font-weight:bold;letter-spacing:-0.039px;">Evento Realizado</span>
<div class="a sk" style="left:589px;top:223px;width:145px;height:27px;background:#fff;"></div>
<div class="a rs2" style="left:716px;top:225px;width:16px;height:23px;"></div>
<svg class="a" style="left:720px;top:235.0px" width="8" height="4" viewBox="0 0 8 4"><path d="M0.5 0h7L4 3.7z" fill="#000"/></svg>
<div class="a " style="left:157px;top:267px;width:605px;height:217px;border:1px solid #808080;"></div>
<span class="t" style="left:167.50px;top:290.69px;font-size:11px;color:#000;font-weight:bold;letter-spacing:0.185px;">Forma de Pagamento</span>
<div class="a sk" style="left:290px;top:283px;width:175px;height:27px;background:#fff;"></div>
<div class="a rs2" style="left:447px;top:285px;width:16px;height:23px;"></div>
<svg class="a" style="left:451px;top:295.0px" width="8" height="4" viewBox="0 0 8 4"><path d="M0.5 0h7L4 3.7z" fill="#000"/></svg>
<span class="t" style="left:475.00px;top:288.69px;font-size:11px;color:#000;font-weight:bold;letter-spacing:-0.085px;">Turno</span>
<div class="a sk" style="left:512px;top:282px;width:89px;height:27px;background:#fff;"></div>
<div class="a rs2" style="left:583px;top:284px;width:16px;height:23px;"></div>
<svg class="a" style="left:587px;top:294.0px" width="8" height="4" viewBox="0 0 8 4"><path d="M0.5 0h7L4 3.7z" fill="#000"/></svg>
<span class="t" style="left:607.00px;top:288.69px;font-size:11px;color:#000;font-weight:bold;letter-spacing:0.427px;">Pernoite</span>
<div class="a sk" style="left:661px;top:282px;width:89px;height:27px;background:#fff;"></div>
<div class="a rs2" style="left:732px;top:284px;width:16px;height:23px;"></div>
<svg class="a" style="left:736px;top:294.0px" width="8" height="4" viewBox="0 0 8 4"><path d="M0.5 0h7L4 3.7z" fill="#000"/></svg>
<span class="t" style="left:471.50px;top:314.19px;font-size:11px;color:#000;font-weight:bold;letter-spacing:0.054px;">Local Pernoite</span>
<div class="a sk" style="left:471px;top:325px;width:154px;height:27px;background:#ffffe1;"></div>
<div class="a rs2" style="left:607px;top:327px;width:16px;height:23px;"></div>
<svg class="a" style="left:611px;top:337.0px" width="8" height="4" viewBox="0 0 8 4"><path d="M0.5 0h7L4 3.7z" fill="#000"/></svg>
<div class="a " style="left:174px;top:316px;width:291px;height:87px;background:#c0c0c0;"></div>
<div class="a " style="left:174px;top:324px;width:291px;height:79px;background:#c0c0c0;border:1px solid #808080;box-shadow:inset 1px 1px 0 #fff;"></div>
<span class="t" style="left:267.00px;top:340.09px;font-size:11px;color:#000;font-weight:bold;letter-spacing:0.170px;">Data do Depósito</span>
<div class="a sk" style="left:264px;top:351px;width:122px;height:23px;background:#fff;"></div>
<span class="t" style="left:181.00px;top:384.09px;font-size:11px;color:#000;font-weight:bold;letter-spacing:0.153px;">Valor Depósito</span>
<div class="a sk" style="left:264px;top:378px;width:114px;height:23px;background:#fff;"></div>
<span class="t" style="left:328.00px;top:383.89px;font-size:11px;color:#000;font-weight:bold;letter-spacing:0.246px;">R$ 0,00</span>
<div class="a gb" style="left:766px;top:212px;width:422px;height:271px;"></div>
<div class="a " style="left:772.5px;top:210px;width:68.5px;height:5px;background:#fff;"></div>
<span class="t" style="left:774.50px;top:208.02px;font-size:12.5px;color:#000;font-weight:bold;letter-spacing:0.177px;">Check-List</span>
<div class="a" style="left:768px;top:224px;width:210px;height:240px;overflow:hidden;">
<div class="a cb" style="left:3px;top:6px;width:11px;height:11px;"></div>
<span class="t" style="left:18.5px;top:5.67px;font-size:13.5px;font-weight:bold;letter-spacing:-0.134px;">TURNO INTEGRAL</span>
<div class="a cb" style="left:3px;top:25px;width:11px;height:11px;"></div>
<span class="t" style="left:18.5px;top:24.67px;font-size:13.5px;font-weight:bold;letter-spacing:0.029px;">CAFÉ MANHÃ</span>
<div class="a cb" style="left:3px;top:44px;width:11px;height:11px;"></div>
<span class="t" style="left:18.5px;top:43.67px;font-size:13.5px;font-weight:bold;letter-spacing:-0.291px;">ALMOÇO ESCOLA</span>
<div class="a cb" style="left:3px;top:63px;width:11px;height:11px;"></div>
<span class="t" style="left:18.5px;top:62.67px;font-size:13.5px;font-weight:bold;letter-spacing:-0.250px;">LANCHE DA TARDE</span>
<div class="a cb" style="left:3px;top:82px;width:11px;height:11px;"></div>
<span class="t" style="left:18.5px;top:81.67px;font-size:13.5px;font-weight:bold;letter-spacing:0.515px;">MEIO TURNO - MANHÃ</span>
<div class="a cb" style="left:3px;top:101px;width:11px;height:11px;"></div>
<span class="t" style="left:18.5px;top:100.67px;font-size:13.5px;font-weight:bold;letter-spacing:0.103px;">MEIO TURNO - TARDE</span>
<div class="a cb" style="left:3px;top:120px;width:11px;height:11px;"></div>
<span class="t" style="left:18.5px;top:119.67px;font-size:13.5px;font-weight:bold;letter-spacing:-0.438px;">JANTA</span>
<div class="a cb" style="left:3px;top:139px;width:11px;height:11px;"></div>
<span class="t" style="left:18.5px;top:138.67px;font-size:13.5px;font-weight:bold;letter-spacing:-0.232px;">LUAU SEM FRUTAS</span>
<div class="a cb" style="left:3px;top:158px;width:11px;height:11px;"></div>
<span class="t" style="left:18.5px;top:157.67px;font-size:13.5px;font-weight:bold;letter-spacing:-0.301px;">PERNOITE = PÁSSAROS</span>
<div class="a cb" style="left:3px;top:177px;width:11px;height:11px;"></div>
<span class="t" style="left:18.5px;top:176.67px;font-size:13.5px;font-weight:bold;letter-spacing:-0.126px;">PERNOITE = TIETA</span>
<div class="a cb" style="left:3px;top:196px;width:11px;height:11px;"></div>
<span class="t" style="left:18.5px;top:195.67px;font-size:13.5px;font-weight:bold;letter-spacing:-0.207px;">PERNOITE = URSO</span>
<div class="a cb" style="left:3px;top:215px;width:11px;height:11px;"></div>
<span class="t" style="left:18.5px;top:214.67px;font-size:13.5px;font-weight:bold;letter-spacing:0.028px;">PERNOITE = ACANTONAMENTO</span>
</div>
<div class="a" style="left:978px;top:224px;width:208px;height:240px;overflow:hidden;">
<div class="a cb" style="left:1px;top:6px;width:11px;height:11px;"></div>
<span class="t" style="left:16px;top:5.67px;font-size:13.5px;font-weight:bold;letter-spacing:0.089px;">PERNOITE =  CAMPING</span>
<div class="a cb" style="left:1px;top:25px;width:11px;height:11px;"></div>
<span class="t" style="left:16px;top:24.67px;font-size:13.5px;font-weight:bold;letter-spacing:0.091px;">LUAU COM MESA DE FRUTAS</span>
<div class="a cb" style="left:1px;top:44px;width:11px;height:11px;"></div>
<span class="t" style="left:16px;top:43.67px;font-size:13.5px;font-weight:bold;letter-spacing:-0.322px;">FOGUEIRA</span>
<div class="a cb" style="left:1px;top:63px;width:11px;height:11px;"></div>
<span class="t" style="left:16px;top:62.67px;font-size:13.5px;font-weight:bold;letter-spacing:0.036px;">ALMOÇO CAMPEIRO</span>
<div class="a cb" style="left:1px;top:82px;width:11px;height:11px;"></div>
<span class="t" style="left:16px;top:81.67px;font-size:13.5px;font-weight:bold;letter-spacing:-0.688px;">CHURRASCO</span>
<div class="a cb" style="left:1px;top:101px;width:11px;height:11px;"></div>
<span class="t" style="left:16px;top:100.67px;font-size:13.5px;font-weight:bold;letter-spacing:-0.192px;">SEM CARNE DE PORCO</span>
<div class="a cb" style="left:1px;top:120px;width:11px;height:11px;"></div>
<span class="t" style="left:16px;top:119.67px;font-size:13.5px;font-weight:bold;letter-spacing:-0.007px;">PROJETO = MÃOS NA TERRA</span>
<div class="a cb" style="left:1px;top:139px;width:11px;height:11px;"></div>
<span class="t" style="left:16px;top:138.67px;font-size:13.5px;font-weight:bold;letter-spacing:-0.098px;">PROJETO = DELGADA CAMADA</span>
<div class="a cb" style="left:1px;top:158px;width:11px;height:11px;"></div>
<span class="t" style="left:16px;top:157.67px;font-size:13.5px;font-weight:bold;letter-spacing:-0.114px;">PROJETO = PLANETA ÁGUA</span>
<div class="a cb" style="left:1px;top:177px;width:11px;height:11px;"></div>
<span class="t" style="left:16px;top:176.67px;font-size:13.5px;font-weight:bold;letter-spacing:-0.137px;">PROJETO = ALIMENTAÇÃO SAUDÁVEL</span>
<div class="a cb" style="left:1px;top:196px;width:11px;height:11px;"></div>
<span class="t" style="left:16px;top:195.67px;font-size:13.5px;font-weight:bold;letter-spacing:-0.267px;">OFICINAS = VIDA SILVESTRE</span>
<div class="a cb" style="left:1px;top:215px;width:11px;height:11px;"></div>
<span class="t" style="left:16px;top:214.67px;font-size:13.5px;font-weight:bold;letter-spacing:-0.259px;">OFICINAS = TERRA</span>
</div>
<div class="a " style="left:1186px;top:225px;width:1px;height:240px;background:#808080;"></div>
<div class="a dither" style="left:768px;top:465px;width:418px;height:16px;"></div>
<div class="a rs2" style="left:768px;top:465px;width:17px;height:16px;"></div>
<svg class="a" style="left:774px;top:469px" width="4" height="8" viewBox="0 0 4 8"><path d="M4 0.5v7L0.3 4z" fill="#000"/></svg>
<div class="a rs2" style="left:785px;top:465px;width:192px;height:16px;"></div>
<div class="a rs2" style="left:1169px;top:465px;width:17px;height:16px;"></div>
<svg class="a" style="left:1176px;top:469px" width="4" height="8" viewBox="0 0 4 8"><path d="M0 0.5v7L3.7 4z" fill="#000"/></svg>
<div class="a sk" style="left:158px;top:487px;width:1054px;height:95px;background:#fff;"></div>
<span class="t" style="left:164px;top:491.69px;font-size:11px;letter-spacing:-0.562px;">QUANTO É A DIÁRIA PARA 1 CASAL? TEM CAFÉ DA MANHÃ? QUAL O VALOR?</span>
<div class="a " style="left:157px;top:582px;width:1055px;height:84px;background:#fff;border-style:solid;border-color:#808080 #fff #fff #808080;border-width:3px 1px 1px 2px;box-shadow:inset -1px -1px 0 #d4d0c8;"></div>
<div class="a " style="left:159px;top:585px;width:12px;height:18px;background:#d4d0c8;border:1px solid;border-color:#fff #000 #000 #fff;"></div>
<div class="a " style="left:171px;top:585px;width:459.5px;height:18px;background:#d4d0c8;border:1px solid;border-color:#fff #000 #000 #fff;"></div>
<span class="t" style="left:173.00px;top:588.69px;font-size:11px;color:#00008b;letter-spacing:-0.049px;text-decoration:underline;text-decoration-skip-ink:none;">Evento</span>
<div class="a " style="left:630.5px;top:585px;width:75px;height:18px;background:#d4d0c8;border:1px solid;border-color:#fff #000 #000 #fff;"></div>
<span class="t" style="left:632.50px;top:588.69px;font-size:11px;color:#00008b;letter-spacing:-0.241px;text-decoration:underline;text-decoration-skip-ink:none;">Dta Solicitação</span>
<div class="a " style="left:705.5px;top:585px;width:75px;height:18px;background:#d4d0c8;border:1px solid;border-color:#fff #000 #000 #fff;"></div>
<span class="t" style="left:707.50px;top:588.69px;font-size:11px;color:#00008b;letter-spacing:-0.019px;text-decoration:underline;text-decoration-skip-ink:none;">Dta Evento</span>
<div class="a " style="left:780.5px;top:585px;width:80px;height:18px;background:#d4d0c8;border:1px solid;border-color:#fff #000 #000 #fff;"></div>
<span class="t" style="left:782.50px;top:588.69px;font-size:11px;color:#00008b;letter-spacing:-0.290px;text-decoration:underline;text-decoration-skip-ink:none;">Dta Negociação</span>
<div class="a " style="left:860.5px;top:585px;width:75px;height:18px;background:#d4d0c8;border:1px solid;border-color:#fff #000 #000 #fff;"></div>
<span class="t" style="left:862.50px;top:588.69px;font-size:11px;color:#00008b;letter-spacing:-0.274px;text-decoration:underline;text-decoration-skip-ink:none;">Dta Envio</span>
<div class="a " style="left:159px;top:603px;width:12px;height:18px;background:#d4d0c8;border:1px solid;border-color:#fff #000 #000 #fff;"></div>
<div class="a " style="left:171px;top:620px;width:764.5px;height:1px;background:#c0c0c0;"></div>
<div class="a " style="left:159px;top:621px;width:12px;height:18px;background:#d4d0c8;border:1px solid;border-color:#fff #000 #000 #fff;"></div>
<div class="a " style="left:171px;top:638px;width:764.5px;height:1px;background:#c0c0c0;"></div>
<div class="a " style="left:630px;top:603px;width:1px;height:36px;background:#c0c0c0;"></div>
<div class="a " style="left:705px;top:603px;width:1px;height:36px;background:#c0c0c0;"></div>
<div class="a " style="left:780px;top:603px;width:1px;height:36px;background:#c0c0c0;"></div>
<div class="a " style="left:860px;top:603px;width:1px;height:36px;background:#c0c0c0;"></div>
<div class="a " style="left:935px;top:603px;width:1px;height:36px;background:#c0c0c0;"></div>
<svg class="a" style="left:162px;top:606px" width="7" height="11" viewBox="0 0 7 11"><path d="M0 0l6.5 5.5L0 11z" fill="#000"/></svg>
<div class="a" style="left:172px;top:604px;width:458px;height:16px;overflow:hidden;">
<span class="t" style="left:1px;top:2.19px;font-size:11px;font-weight:bold;letter-spacing:-0.138px;">QUANTO É A DIÁRIA PARA 1 CASAL? TEM CAFÉ DA MANHÃ? QUAL O VALOR DO PERNOITE COM CAFÉ</span>
</div>
<span class="t" style="left:782.50px;top:623.84px;font-size:12px;color:#000;font-weight:bold;letter-spacing:0.827px;">20/06/2012</span>
<span class="t" style="left:863.00px;top:623.84px;font-size:12px;color:#000;font-weight:bold;letter-spacing:0.771px;">15/06/2012</span>
<div class="a dither" style="left:1194px;top:585px;width:16px;height:79px;"></div>
<div class="a rs2" style="left:1194px;top:585px;width:16px;height:16px;"></div>
<svg class="a" style="left:1198px;top:591px" width="8" height="4" viewBox="0 0 8 4"><path d="M0.5 4h7L4 0.3z" fill="#000"/></svg>
<div class="a rs2" style="left:1194px;top:601px;width:16px;height:16px;"></div>
<div class="a rs2" style="left:1194px;top:648px;width:16px;height:16px;"></div>
<svg class="a" style="left:1198px;top:654.5px" width="8" height="4" viewBox="0 0 8 4"><path d="M0.5 0h7L4 3.7z" fill="#000"/></svg>
<div class="a " style="left:471px;top:352px;width:154px;height:268px;background:#ffffe1;border:1px solid #000;overflow:hidden;"></div>
<div class="a" style="left:472px;top:353px;width:152px;height:266px;overflow:hidden;">
<span class="t" style="left:2.5px;top:3.05px;font-size:14px;font-weight:bold;letter-spacing:-0.054px;">ACANTONAMENTO</span>
<span class="t" style="left:2.5px;top:22.05px;font-size:14px;font-weight:bold;letter-spacing:-0.975px;">PÁSSAROS</span>
<span class="t" style="left:2.5px;top:41.05px;font-size:14px;font-weight:bold;letter-spacing:-0.694px;">TODOS</span>
<span class="t" style="left:2.5px;top:60.05px;font-size:14px;font-weight:bold;letter-spacing:-2.029px;">URS</span>
<span class="t" style="left:2.5px;top:79.05px;font-size:14px;font-weight:bold;letter-spacing:-2.029px;">URS</span>
<span class="t" style="left:2.5px;top:98.05px;font-size:14px;font-weight:bold;letter-spacing:-1.233px;">URSO</span>
<span class="t" style="left:2.5px;top:117.05px;font-size:14px;font-weight:bold;letter-spacing:-0.476px;">TIETA</span>
<span class="t" style="left:2.5px;top:136.05px;font-size:14px;font-weight:bold;letter-spacing:-0.354px;">ACANTONA. E PáSSAROS</span>
<span class="t" style="left:2.5px;top:155.05px;font-size:14px;font-weight:bold;letter-spacing:-0.185px;">CAMPING</span>
<span class="t" style="left:2.5px;top:174.05px;font-size:14px;font-weight:bold;letter-spacing:-0.185px;">CAMPING</span>
<span class="t" style="left:2.5px;top:193.05px;font-size:14px;font-weight:bold;letter-spacing:-0.185px;">CAMPING</span>
<span class="t" style="left:2.5px;top:212.05px;font-size:14px;font-weight:bold;letter-spacing:-0.115px;">CAMPING E ACANTONAMENTO</span>
<span class="t" style="left:2.5px;top:231.05px;font-size:14px;font-weight:bold;letter-spacing:-0.115px;">CAMPING E ACANTONAMENTO</span>
<span class="t" style="left:2.5px;top:250.05px;font-size:14px;font-weight:bold;letter-spacing:-0.543px;">URSO E TIETA</span>
</div>
<div class="a rs" style="left:789px;top:677px;width:100px;height:30px;"></div>
<span class="t" style="left:833.50px;top:687.44px;font-size:12px;color:#000;font-weight:bold;letter-spacing:-0.420px;">Excluir</span>
<div class="a rs" style="left:893px;top:677px;width:125px;height:30px;"></div>
<span class="t" style="left:929.70px;top:687.44px;font-size:12px;color:#000;font-weight:bold;letter-spacing:-0.230px;">Enviar Email</span>
<div class="a rs" style="left:1020px;top:677px;width:100px;height:30px;"></div>
<span class="t" style="left:1059.50px;top:687.44px;font-size:12px;color:#000;font-weight:bold;letter-spacing:-0.171px;">Cancelar</span>
<div class="a rs" style="left:1122px;top:677px;width:100px;height:30px;"></div>
<span class="t" style="left:1167.50px;top:687.44px;font-size:12px;color:#000;font-weight:bold;letter-spacing:-0.106px;">Salvar</span>
<svg class="a" style="left:148px;top:684px" width="19" height="20" viewBox="0 0 19 20" shape-rendering="crispEdges">
<path d="M6 0h7v7h6v6h-6v7H6v-7H0V7h6z" fill="#f5ab00"/><rect x="6" y="7" width="7" height="6" fill="#000"/></svg>
<div class="a " style="left:177px;top:686px;width:2px;height:2px;background:#ffff00;"></div>
<div class="a " style="left:180px;top:686px;width:2px;height:2px;background:#ffff00;"></div>
<div class="a " style="left:183px;top:686px;width:2px;height:2px;background:#ffff00;"></div>
<div class="a " style="left:177px;top:689px;width:9px;height:1px;background:#ffff00;"></div>
<svg class="a" style="left:808px;top:681.7px" width="21" height="20" viewBox="0 0 21 20">
<g stroke-linecap="round" fill="none">
<path d="M3.100 5.700L18.300 15.300M15.200 3.200L5.400 17.800" stroke="#b80814" stroke-width="4.200" transform="translate(.4 .8)"/>
<path d="M3.100 5.300L18.300 14.900M15.200 2.800L5.400 17.400" stroke="#f42c3c" stroke-width="4"/>
<path d="M3 4.400L9.300 8.400M15.400 1.900L11.300 8M12.500 10.300L18.400 14" stroke="#ff98a0" stroke-width="1.200" opacity=".75"/>
</g></svg>
<svg class="a" style="left:911px;top:685px" width="15" height="15" viewBox="0 0 15 15">
<rect width="14.600" height="15" fill="#fff"/>
<path d="M.5 4.800L7 .5 13.800 4.800V14.300H.5z" fill="#e6e6fb" stroke="#a4a4e6" stroke-width=".7" stroke-linejoin="round"/>
<path d="M2.600 4.500h9V8.300L7 11 2.600 8.300z" fill="#fff2b8"/><path d="M2.600 4.500h9v1.200h-9z" fill="#fffbe6"/>
<path d="M.5 5L7 10.200 13.800 5" fill="#ececfc" fill-opacity=".55" stroke="#b0b0ec" stroke-width=".7"/>
<path d="M.6 14.200L5.600 9.200M13.700 14.200L8.500 9.200" stroke="#b8b8ee" stroke-width=".7"/>
<path d="M12.600 .9L5 12" stroke="#0c3c9c" stroke-width="2.300" stroke-linecap="round"/>
<path d="M12.500 .9L5.300 11.500" stroke="#2468dc" stroke-width="1.300" stroke-linecap="round"/>
<path d="M5.100 11.700L4.300 13.100" stroke="#555" stroke-width="1" stroke-linecap="round"/>
</svg>
<svg class="a" style="left:1034.9px;top:681.2px" width="18" height="22" viewBox="0 0 18 22">
<defs><linearGradient id="cg" x1=".8" y1="0" x2=".2" y2="1"><stop offset="0" stop-color="#d00c00"/><stop offset=".45" stop-color="#f03412"/><stop offset=".8" stop-color="#ff8040"/><stop offset="1" stop-color="#ffc890"/></linearGradient></defs>
<path d="M9.100 .7C12.500 1.200 15.500 3.800 16.400 7.700 16.800 11.500 14 15 10.800 17.100L12 20.600Q12 21.600 11 21.500L1.200 20.900Q.4 20.800 .6 20L1.900 10.200Q2.200 9.400 2.800 10.200L5.200 13.100C8.500 11.500 12 8.500 12.200 5.900 12.300 4 11 2 9.100 .7z" fill="url(#cg)" stroke="#f03c18" stroke-width=".7" stroke-linejoin="round"/></svg>
<svg class="a" style="left:1140.8px;top:680.8px" width="23" height="22" viewBox="0 0 23 22">
<defs><linearGradient id="sg1" gradientUnits="userSpaceOnUse" x1="11.500" y1="5" x2="16.500" y2="9.500"><stop offset="0" stop-color="#48d020"/><stop offset=".4" stop-color="#c4f6b8"/><stop offset=".72" stop-color="#5cd818"/><stop offset="1" stop-color="#0c9004"/></linearGradient>
<linearGradient id="sg2" gradientUnits="userSpaceOnUse" x1="1" y1="7" x2="8" y2="19"><stop offset="0" stop-color="#2cb418"/><stop offset=".55" stop-color="#9cf400"/><stop offset="1" stop-color="#d4ff70"/></linearGradient></defs>
<path d="M17.800 .2L22.300 4.200 8.700 20.900Q7.500 21.800 6 21.700L7.700 12z" fill="url(#sg1)" stroke="#28b010" stroke-width=".6" stroke-linejoin="round"/>
<path d="M.2 8L5.900 5.600 7.700 12 10.500 13.500 8.700 20.900Q6.500 22 4.500 21.300z" fill="url(#sg2)" stroke="#28b010" stroke-width=".6" stroke-linejoin="round"/>
</svg>
</body></html>
